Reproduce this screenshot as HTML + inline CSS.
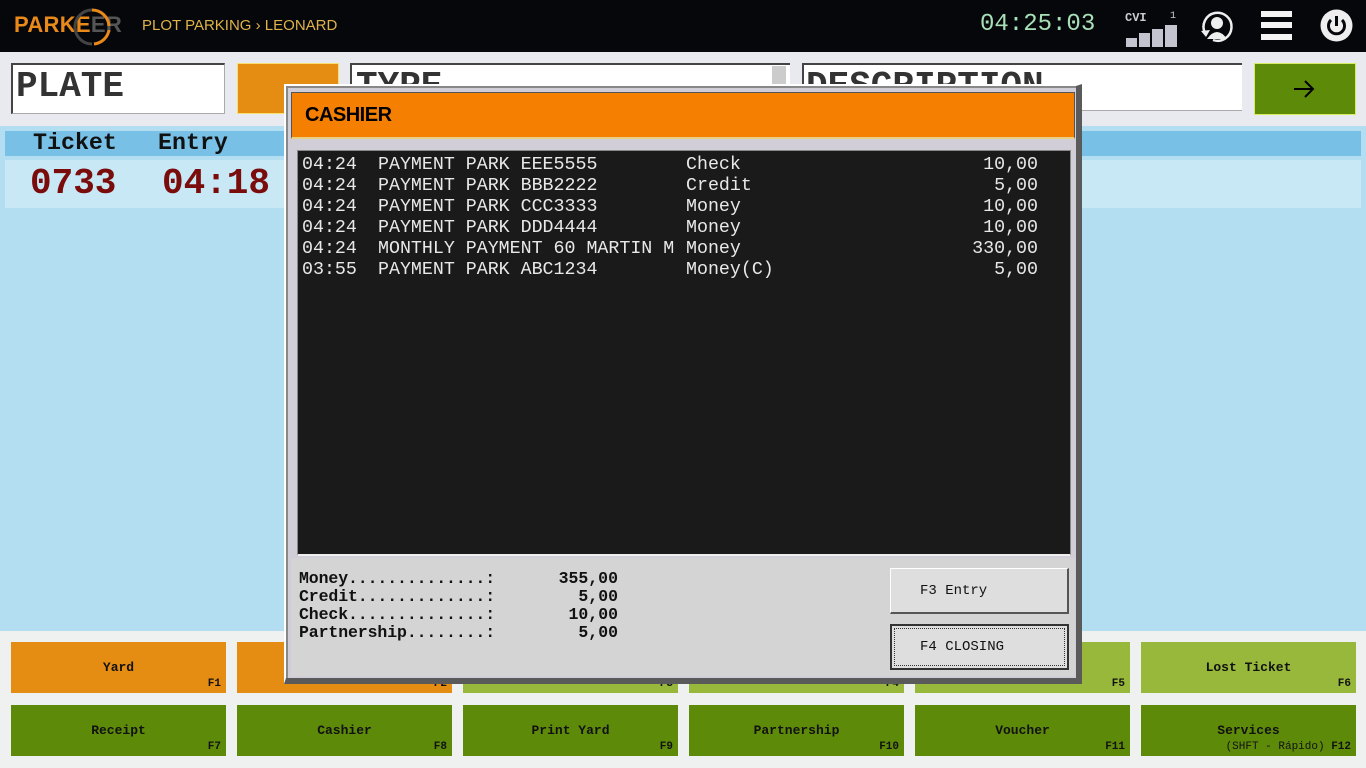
<!DOCTYPE html>
<html><head><meta charset="utf-8"><style>
*{margin:0;padding:0;box-sizing:border-box}
body{width:1366px;height:768px;overflow:hidden;background:#e9e9f0;position:relative;font-family:"Liberation Sans",sans-serif}
.a{position:absolute}
.mono{font-family:"Liberation Mono",monospace}
.btn{position:absolute;width:215px;height:51px;font-family:"Liberation Mono",monospace;font-weight:bold;font-size:13px;color:#111;text-align:center}
.btn .t{position:absolute;top:18px;left:0;right:0}
.btn .k{position:absolute;right:5px;bottom:3px;font-size:11px}
.o{background:#e58c12}.l{background:#97b83a}.d{background:#5e8a0a}
.row{position:absolute;white-space:pre;font-family:"Liberation Mono",monospace;font-size:18.3px;color:#e8e8e8;line-height:21px}
.r{text-align:right;width:120px;left:918px}
.s{position:absolute;font-family:"Liberation Mono",monospace;font-size:16.5px;font-weight:bold;color:#111;line-height:18px;white-space:pre}
</style></head><body>
<div class="a" style="left:0;top:0;width:1366px;height:52px;background:#06070b"></div>
<div class="a" style="left:14px;top:12px;font-size:22px;font-weight:bold;color:#e8891a;letter-spacing:0.3px">PARKE<span style="color:#555">ER</span></div>
<svg class="a" style="left:72px;top:6px" width="56" height="40"><path d="M20 4 A17 17 0 0 0 20 38" stroke="#444" stroke-width="3" fill="none"/><path d="M20 4 A17 17 0 0 1 37 20" stroke="#e8891a" stroke-width="3" fill="none"/><path d="M22 38 A17 17 0 0 0 37 24" stroke="#e8891a" stroke-width="3" fill="none"/></svg>
<div class="a" style="left:142px;top:17px;font-size:15px;color:#e0b24a">PLOT PARKING › LEONARD</div>
<div class="a mono" style="left:980px;top:11px;font-size:24px;color:#a8e0b8">04:25:03</div>
<div class="a mono" style="left:1125px;top:11px;font-size:12px;font-weight:bold;color:#ccc">CVI</div>
<div class="a mono" style="left:1170px;top:11px;font-size:10px;color:#ccc">1</div>
<div class="a" style="left:1126px;top:38px;width:11px;height:9px;background:#c4c4d0"></div>
<div class="a" style="left:1139px;top:33px;width:11px;height:14px;background:#c4c4d0"></div>
<div class="a" style="left:1152px;top:29px;width:11px;height:18px;background:#c4c4d0"></div>
<div class="a" style="left:1165px;top:25px;width:12px;height:22px;background:#c4c4d0"></div>
<svg class="a" style="left:1199px;top:9px" width="36" height="36"><path d="M6 24 A14 14 0 1 1 14 31" stroke="#eee" stroke-width="2.5" fill="none"/><path d="M2 22 L7 28 L11 21" fill="#eee"/><circle cx="18" cy="14" r="6" fill="#eee"/><path d="M8 30 Q18 16 28 30 Z" fill="#eee"/></svg>
<div class="a" style="left:1261px;top:11px;width:31px;height:6px;background:#f4f4f4"></div>
<div class="a" style="left:1261px;top:22px;width:31px;height:6px;background:#f4f4f4"></div>
<div class="a" style="left:1261px;top:34px;width:31px;height:6px;background:#f4f4f4"></div>
<svg class="a" style="left:1320px;top:9px" width="33" height="33"><circle cx="16.5" cy="16.5" r="16" fill="#eee"/><path d="M11 11 A8 8 0 1 0 22 11" stroke="#06070b" stroke-width="3" fill="none"/><path d="M16.5 7 V17" stroke="#06070b" stroke-width="3"/></svg>
<div class="a" style="left:11px;top:63px;width:214px;height:51px;background:#fff;border:1px solid #aaa;border-top:2px solid #444;border-left:2px solid #444"></div>
<div class="a mono" style="left:16px;top:66px;font-size:36px;font-weight:bold;color:#333">PLATE</div>
<div class="a" style="left:237px;top:63px;width:102px;height:51px;background:#e58c12;border:1px solid #f5e070"></div>
<div class="a" style="left:350px;top:63px;width:440px;height:51px;background:#fff;border-top:2px solid #444;border-left:2px solid #444"></div>
<div class="a" style="left:772px;top:66px;width:14px;height:22px;background:#ccc"></div>
<div class="a mono" style="left:356px;top:66px;font-size:36px;font-weight:bold;color:#333">TYPE</div>
<div class="a" style="left:802px;top:63px;width:440px;height:48px;background:#fff;border-top:2px solid #444;border-left:2px solid #444;border-bottom:1px solid #aaa"></div>
<div class="a mono" style="left:806px;top:66px;font-size:36px;font-weight:bold;color:#333">DESCRIPTION</div>
<div class="a" style="left:1254px;top:63px;width:102px;height:52px;background:#5e8a0a;border:1px solid #d8ec60"></div>
<svg class="a" style="left:1292px;top:78px" width="24" height="22"><path d="M2 11 H21 M13 3 L21 11 L13 19" stroke="#000" stroke-width="2" fill="none"/></svg>
<div class="a" style="left:0;top:126px;width:1366px;height:505px;background:#b3def2"></div>
<div class="a" style="left:5px;top:131px;width:1356px;height:25px;background:#78c0e6"></div>
<div class="a" style="left:5px;top:160px;width:1356px;height:48px;background:#c8e8f6"></div>
<div class="a mono" style="left:33px;top:130px;font-size:23.3px;font-weight:bold;color:#111">Ticket</div>
<div class="a mono" style="left:158px;top:130px;font-size:23.3px;font-weight:bold;color:#111">Entry</div>
<div class="a mono" style="left:30px;top:163px;font-size:36px;font-weight:bold;color:#7a0c0c">0733</div>
<div class="a mono" style="left:162px;top:163px;font-size:36px;font-weight:bold;color:#7a0c0c">04:18</div>
<div class="a" style="left:0;top:631px;width:1366px;height:137px;background:#eff0f0"></div>
<div class="btn o" style="left:11px;top:642px"><span class="t">Yard</span><span class="k">F1</span></div>
<div class="btn o" style="left:237px;top:642px"><span class="k">F2</span></div>
<div class="btn l" style="left:463px;top:642px"><span class="k">F3</span></div>
<div class="btn l" style="left:689px;top:642px"><span class="k">F4</span></div>
<div class="btn l" style="left:915px;top:642px"><span class="k">F5</span></div>
<div class="btn l" style="left:1141px;top:642px"><span class="t">Lost Ticket</span><span class="k">F6</span></div>
<div class="btn d" style="left:11px;top:705px"><span class="t">Receipt</span><span class="k">F7</span></div>
<div class="btn d" style="left:237px;top:705px"><span class="t">Cashier</span><span class="k">F8</span></div>
<div class="btn d" style="left:463px;top:705px"><span class="t">Print Yard</span><span class="k">F9</span></div>
<div class="btn d" style="left:689px;top:705px"><span class="t">Partnership</span><span class="k">F10</span></div>
<div class="btn d" style="left:915px;top:705px"><span class="t">Voucher</span><span class="k">F11</span></div>
<div class="btn d" style="left:1141px;top:705px"><span class="t">Services</span><span class="k" style="font-weight:normal">(SHFT - Rápido) <b>F12</b></span></div>
<div class="a" style="left:284px;top:84px;width:798px;height:600px;background:#d2ced8;border:2px solid #fff;border-right:6px solid #5a5a5a;border-bottom:6px solid #5a5a5a;box-shadow:inset 2px 2px 0 #888"></div>
<div class="a" style="left:291px;top:92px;width:784px;height:47px;background:#f57f00;border:1px solid #555;border-bottom:2px solid #e8d080"></div>
<div class="a" style="left:305px;top:104px;font-size:20px;font-weight:bold;color:#000;letter-spacing:-0.5px">CASHIER</div>
<div class="a" style="left:297px;top:150px;width:774px;height:406px;background:#1a1a1a;border:1px solid #888;border-bottom:2px solid #eee"></div>
<div class="a" style="left:291px;top:558px;width:784px;height:118px;background:#d4d4d4"></div>
<div class="a" style="left:0;top:155px;width:1366px;height:130px">
<div class="row" style="top:0;left:302px">04:24</div><div class="row" style="top:0;left:378px">PAYMENT PARK EEE5555</div><div class="row" style="top:0;left:686px">Check</div><div class="row r" style="top:0">10,00</div>
<div class="row" style="top:21px;left:302px">04:24</div><div class="row" style="top:21px;left:378px">PAYMENT PARK BBB2222</div><div class="row" style="top:21px;left:686px">Credit</div><div class="row r" style="top:21px">5,00</div>
<div class="row" style="top:42px;left:302px">04:24</div><div class="row" style="top:42px;left:378px">PAYMENT PARK CCC3333</div><div class="row" style="top:42px;left:686px">Money</div><div class="row r" style="top:42px">10,00</div>
<div class="row" style="top:63px;left:302px">04:24</div><div class="row" style="top:63px;left:378px">PAYMENT PARK DDD4444</div><div class="row" style="top:63px;left:686px">Money</div><div class="row r" style="top:63px">10,00</div>
<div class="row" style="top:84px;left:302px">04:24</div><div class="row" style="top:84px;left:378px">MONTHLY PAYMENT 60 MARTIN M</div><div class="row" style="top:84px;left:686px">Money</div><div class="row r" style="top:84px">330,00</div>
<div class="row" style="top:105px;left:302px">03:55</div><div class="row" style="top:105px;left:378px">PAYMENT PARK ABC1234</div><div class="row" style="top:105px;left:686px">Money(C)</div><div class="row r" style="top:105px">5,00</div>
</div>
<div class="s" style="left:299px;top:570px;letter-spacing:-0.1px">Money..............:
Credit.............:
Check..............:
Partnership........:</div>
<div class="s" style="left:518px;top:570px;width:100px;text-align:right">355,00
5,00
10,00
5,00</div>
<div class="a" style="left:890px;top:568px;width:179px;height:46px;background:#dedede;border:1px solid #fff;border-right:2px solid #555;border-bottom:2px solid #555"></div>
<div class="a mono" style="left:920px;top:583px;font-size:14px;color:#111">F3 Entry</div>
<div class="a" style="left:890px;top:624px;width:179px;height:46px;background:#dedede;border:2px solid #333"><div style="position:absolute;inset:2px;border:1px dotted #333"></div></div>
<div class="a mono" style="left:920px;top:639px;font-size:14px;color:#111">F4 CLOSING</div>
</body></html>
